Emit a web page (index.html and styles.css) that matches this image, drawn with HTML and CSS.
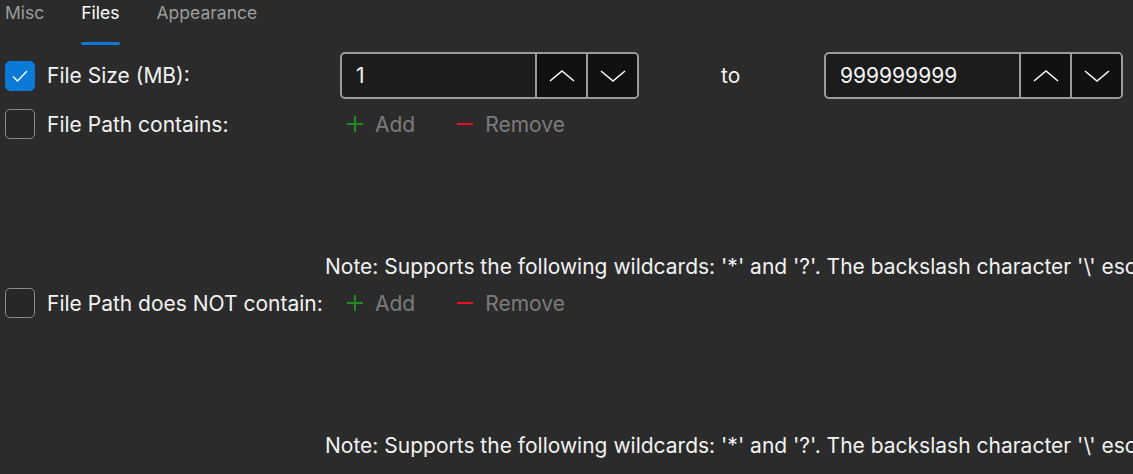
FILE: index.html
```html
<!DOCTYPE html>
<html>
<head>
<meta charset="utf-8">
<link rel="stylesheet" href="styles.css">
</head>
<body>
<div class="tabs">
  <div class="tab">Misc</div>
  <div class="tab active">Files</div>
  <div class="tab">Appearance</div>
</div>

<div class="row size-row">
  <label class="check">
    <span class="box checked"><svg width="18" height="14" viewBox="0 0 18 14"><path d="M2 7.5 L6.5 12 L16 2" fill="none" stroke="#fff" stroke-width="1.4"/></svg></span>
    <span class="label">File Size (MB):</span>
  </label>
  <div class="spin">
    <div class="value">1</div>
    <div class="btn"><svg width="26" height="14" viewBox="0 0 26 14"><path d="M1 12 L13 2 L25 12" fill="none" stroke="#fff" stroke-width="1.5"/></svg></div>
    <div class="btn"><svg width="26" height="14" viewBox="0 0 26 14"><path d="M1 2 L13 12 L25 2" fill="none" stroke="#fff" stroke-width="1.5"/></svg></div>
  </div>
  <div class="to">to</div>
  <div class="spin">
    <div class="value">999999999</div>
    <div class="btn"><svg width="26" height="14" viewBox="0 0 26 14"><path d="M1 12 L13 2 L25 12" fill="none" stroke="#fff" stroke-width="1.5"/></svg></div>
    <div class="btn"><svg width="26" height="14" viewBox="0 0 26 14"><path d="M1 2 L13 12 L25 2" fill="none" stroke="#fff" stroke-width="1.5"/></svg></div>
  </div>
</div>

<div class="section">
  <div class="row path-row">
    <label class="check">
      <span class="box"></span>
      <span class="label">File Path contains:</span>
    </label>
    <div class="actions">
      <span class="action"><svg width="16" height="16" viewBox="0 0 16 16"><path d="M8 0 V16 M0 8 H16" stroke="#1e8c1e" stroke-width="2"/></svg>Add</span>
      <span class="action"><svg width="16" height="16" viewBox="0 0 16 16"><path d="M0 8 H16" stroke="#e81123" stroke-width="2"/></svg>Remove</span>
    </div>
  </div>
  <div class="list"></div>
  <div class="note">Note: Supports the following wildcards: '*' and '?'. The backslash character '\' escapes wildcards.</div>
</div>

<div class="section">
  <div class="row path-row">
    <label class="check">
      <span class="box"></span>
      <span class="label">File Path does NOT contain:</span>
    </label>
    <div class="actions">
      <span class="action"><svg width="16" height="16" viewBox="0 0 16 16"><path d="M8 0 V16 M0 8 H16" stroke="#1e8c1e" stroke-width="2"/></svg>Add</span>
      <span class="action"><svg width="16" height="16" viewBox="0 0 16 16"><path d="M0 8 H16" stroke="#e81123" stroke-width="2"/></svg>Remove</span>
    </div>
  </div>
  <div class="list"></div>
  <div class="note">Note: Supports the following wildcards: '*' and '?'. The backslash character '\' escapes wildcards.</div>
</div>
</body>
</html>
```
FILE: styles.css
```css
html, body {
  margin: 0;
  padding: 0;
  background: #2b2b2b;
  color: #ffffff;
  font-family: Inter, "Noto Sans", sans-serif;
  overflow: hidden;
  width: 1133px;
  height: 474px;
}

.tabs {
  display: flex;
  gap: 37px;
  padding-left: 5px;
  height: 52px;
}

.tab {
  font-size: 17.5px;
  color: #9d9d9d;
  line-height: 26px;
  height: 46px;
  position: relative;
  box-sizing: border-box;
}

.tab.active {
  color: #ffffff;
}

.tab.active::after {
  content: "";
  position: absolute;
  left: 0;
  right: 0;
  top: 42px;
  height: 3px;
  border-radius: 2px;
  background: #0a7ad6;
}

.row {
  display: flex;
  align-items: center;
  padding-left: 5px;
}

.size-row {
  height: 47px;
}

.check {
  display: flex;
  align-items: center;
  gap: 12px;
  width: 335px;
  flex: none;
}

.box {
  width: 30px;
  height: 30px;
  box-sizing: border-box;
  border: 1.5px solid #8c8c8c;
  border-radius: 5px;
  background: #272727;
  display: flex;
  align-items: center;
  justify-content: center;
  flex: none;
}

.box.checked {
  background: #0a7ad6;
  border-color: #0a7ad6;
}

.label {
  font-size: 21px;
  color: #f2f2f2;
  white-space: nowrap;
}

.spin {
  display: flex;
  width: 299px;
  height: 47px;
  box-sizing: border-box;
  border: 2px solid #9b9b9b;
  border-radius: 5px;
  background: #1c1c1c;
  overflow: hidden;
  flex: none;
}

.value {
  flex: 1;
  font-size: 21px;
  color: #f5f5f5;
  padding-left: 14px;
  display: flex;
  align-items: center;
}

.btn {
  width: 49px;
  border-left: 2px solid #9b9b9b;
  background: #111111;
  display: flex;
  align-items: center;
  justify-content: center;
}

.to {
  font-size: 21px;
  width: 185px;
  padding-left: 82px;
  box-sizing: border-box;
  color: #f2f2f2;
}

.section {
  display: flex;
  flex-direction: column;
}

.size-row + .section {
  margin-top: 10px;
}

.path-row {
  height: 30px;
}

.actions {
  display: flex;
  gap: 42px;
  padding-left: 7px;
}

.action {
  display: flex;
  align-items: center;
  gap: 12px;
  font-size: 21px;
  color: #7c7c7c;
}

.list {
  height: 116px;
}

.note {
  font-size: 21px;
  line-height: 24px;
  padding-left: 325px;
  white-space: nowrap;
  color: #f2f2f2;
  margin-bottom: 9px;
  overflow: hidden;
}
```
